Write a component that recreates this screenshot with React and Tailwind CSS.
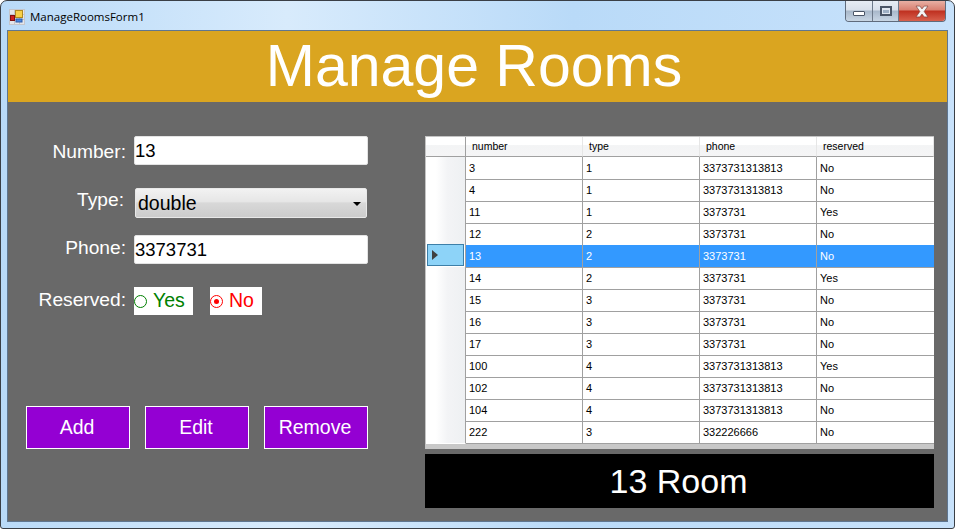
import React from 'react';

const rooms = [
    { number: '3', type: '1', phone: '3373731313813', reserved: 'No' },
    { number: '4', type: '1', phone: '3373731313813', reserved: 'No' },
    { number: '11', type: '1', phone: '3373731', reserved: 'Yes' },
    { number: '12', type: '2', phone: '3373731', reserved: 'No' },
    { number: '13', type: '2', phone: '3373731', reserved: 'No', selected: true },
    { number: '14', type: '2', phone: '3373731', reserved: 'Yes' },
    { number: '15', type: '3', phone: '3373731', reserved: 'No' },
    { number: '16', type: '3', phone: '3373731', reserved: 'No' },
    { number: '17', type: '3', phone: '3373731', reserved: 'No' },
    { number: '100', type: '4', phone: '3373731313813', reserved: 'Yes' },
    { number: '102', type: '4', phone: '3373731313813', reserved: 'No' },
    { number: '104', type: '4', phone: '3373731313813', reserved: 'No' },
    { number: '222', type: '3', phone: '332226666', reserved: 'No' },
];

const gridCols = 'grid grid-cols-[40px_117px_117px_117px_117px]';

const FormIcon = () => (
    <svg width="16" height="16" viewBox="0 0 16 16" className="shrink-0">
        <rect x="0.5" y="0.5" width="15" height="15" fill="#e4e6ea" stroke="#c4c6cc" />
        <path d="M0 5.5H16M0 10.5H16M5.5 0V16M10.5 0V16" stroke="#c4c6cc" />
        <rect x="6.5" y="1.5" width="7" height="7" fill="#f8d048" stroke="#b08a20" />
        <rect x="1.5" y="6.5" width="4" height="5" fill="#d02020" stroke="#801010" />
        <rect x="7" y="10" width="6" height="3" fill="#4a88e0" stroke="#2a5aa8" />
    </svg>
);

const WindowButtons = () => (
    <div className="flex h-[21px] self-start rounded-b-[4px] border border-t-0 border-[#5f6b7c] overflow-hidden">
        <div className="w-[27px] flex items-center justify-center pt-[4px] bg-[linear-gradient(#e6ecf4_0%,#d8e0ea_45%,#a8b8ca_50%,#c8d6e4_100%)] border-r border-[#6d7a8a]">
            <div className="w-[12px] h-[5px] bg-white border border-[#4a5566] rounded-[1px]"></div>
        </div>
        <div className="w-[26px] flex items-center justify-center bg-[linear-gradient(#e6ecf4_0%,#d8e0ea_45%,#a8b8ca_50%,#c8d6e4_100%)] border-r border-[#6d7a8a]">
            <div className="w-[12px] h-[10px] border-[2px] border-[#4a5566] bg-[#dfe6ef] flex items-center justify-center">
                <div className="w-[6px] h-[3px] bg-[#9fb0c4]"></div>
            </div>
        </div>
        <div className="w-[46px] flex items-center justify-center bg-[linear-gradient(#e8b0a4_0%,#d97f70_45%,#bf3020_50%,#d8604c_100%)]">
            <svg width="16" height="13" viewBox="0 0 14 12">
                <path d="M1.5 1H5L7 3.6L9 1H12.5L9 6L12.5 11H9L7 8.4L5 11H1.5L5 6Z" fill="#f4f4f4" stroke="#7a3a34" strokeWidth="0.6" />
            </svg>
        </div>
    </div>
);

const Radio = ({ color, checked, label, className }) => (
    <div className={`h-[28px] bg-white flex items-center text-[19.5px] ${className}`} style={{ color }}>
        <span className="w-[13px] h-[13px] rounded-full border flex items-center justify-center bg-white mr-[6px]" style={{ borderColor: color }}>
            {checked && <span className="w-[5px] h-[5px] rounded-full" style={{ backgroundColor: color }}></span>}
        </span>
        {label}
    </div>
);

const ActionButton = ({ children }) => (
    <button className="w-[104px] h-[43px] bg-[#9400d3] border border-white text-white text-[19.5px] pr-[2px]">{children}</button>
);

const FormRow = ({ label, className, labelClass, children }) => (
    <div className={`flex items-center ${className}`}>
        <label className={`w-[118px] text-right text-white text-[19.2px] leading-none ${labelClass}`}>{label}</label>
        {children}
    </div>
);

const TextBox = ({ value }) => (
    <input readOnly value={value} className="ml-[8px] w-[234px] h-[29px] bg-white border border-[#e3e3e3] rounded-[2px] text-[18.5px] text-black outline-none" />
);

const headerCell = 'bg-[linear-gradient(#ffffff_0%,#ffffff_40%,#f3f4f5_45%,#f5f5f6_100%)]';

const RoomsGrid = () => (
    <div className="border-t border-l border-[#c4c4c4] bg-white text-[11px] text-black">
        <div className={`${gridCols} h-[20px]`}>
            <div className={`border-r border-b border-[#a0a0a0] ${headerCell}`}></div>
            {['number', 'type', 'phone', 'reserved'].map((h) => (
                <div key={h} className={`border-r border-r-[#e6e6e6] border-b border-b-[#a0a0a0] pl-[6px] leading-[19px] text-[10.5px] ${headerCell}`}>{h}</div>
            ))}
        </div>
        {rooms.map((r) => (
            <div key={r.number} className={`${gridCols} h-[22px] ${r.selected ? 'text-white' : ''}`}>
                {r.selected ? (
                    <div className="border-r border-[#a0a0a0] bg-white">
                        <div className="h-[22px] -mt-px mr-px ml-px bg-[#8dd3f8] border border-[#3d7fa8] flex items-center pl-[4px]">
                            <span className="w-0 h-0 border-y-[5px] border-y-transparent border-l-[6px] border-l-[#404040]"></span>
                        </div>
                    </div>
                ) : (
                    <div className="border-r border-r-[#a0a0a0] border-b border-b-white bg-[linear-gradient(90deg,#ffffff_0%,#ffffff_25%,#f3f4f6_55%,#eef0f2_100%)]"></div>
                )}
                {[r.number, r.type, r.phone, r.reserved].map((v, i) => (
                    <div key={i} className={`pl-[3px] leading-[22px] border-b border-b-[#a0a0a0] ${i < 3 ? 'border-r border-r-[#a0a0a0]' : ''} ${r.selected ? 'bg-[#3399ff]' : ''}`}>{v}</div>
                ))}
            </div>
        ))}
        <div className="h-[6px] bg-[#c8c8c8]"></div>
    </div>
);

const App = () => {
    return (
        <div className="w-[955px] h-[529px] flex flex-col bg-white font-['Liberation_Sans',sans-serif]">
            <div className="flex-1 flex flex-col rounded-t-[7px] rounded-b-[3px] border border-[#3a3f46] bg-[linear-gradient(90deg,#b9daf8_0%,#d8ebfc_30%,#b9daf8_60%,#c8e2fb_100%)]">
                <div className="h-[29px] flex items-start justify-between pl-[8px] pr-[8px]">
                    <div className="flex items-center gap-[5px] pt-[7px]">
                        <FormIcon />
                        <span className="text-[11.5px] text-black font-['Open_Sans',sans-serif]">ManageRoomsForm1</span>
                    </div>
                    <WindowButtons />
                </div>
                <div className="mx-[6px] mb-[6px] flex-1 flex flex-col bg-[#696969] border border-[#5f7690]">
                    <div className="h-[71px] bg-[#daa520] flex items-center justify-center text-white text-[59px] leading-none pr-[7px]">Manage Rooms</div>
                    <div className="flex-1 flex pt-[34px]">
                        <div className="w-[417px] flex flex-col">
                            <FormRow label="Number:" labelClass="pt-[3px]"><TextBox value="13" /></FormRow>
                            <FormRow label="Type:" className="mt-[23px]" labelClass="pb-[7px] pr-[2px]">
                                <div className="ml-[9px] w-[232px] h-[30px] rounded-[2px] border border-[#e8e8e8] flex items-center justify-between pl-[2px] pr-[5px] pt-[1px] text-[19.5px] text-black bg-[linear-gradient(#f2f2f2_0%,#e6e6e6_45%,#d8d8d8_50%,#cccccc_100%)]">
                                    double
                                    <span className="w-0 h-0 border-x-[4px] border-x-transparent border-t-[4px] border-t-black"></span>
                                </div>
                            </FormRow>
                            <FormRow label="Phone:" className="mt-[17px]" labelClass="pb-[3px]"><TextBox value="3373731" /></FormRow>
                            <FormRow label="Reserved:" className="mt-[23px]" labelClass="pb-[3px]">
                                <Radio color="#008000" label="Yes" className="ml-[8px] w-[59px]" />
                                <Radio color="#ff0000" checked label="No" className="ml-[17px] w-[52px]" />
                            </FormRow>
                            <div className="flex gap-[15px] pl-[18px] mt-[91px]">
                                <ActionButton>Add</ActionButton>
                                <ActionButton>Edit</ActionButton>
                                <ActionButton>Remove</ActionButton>
                            </div>
                        </div>
                        <div className="w-[509px] flex flex-col">
                            <RoomsGrid />
                            <div className="mt-[5px] h-[54px] bg-black text-white text-[34px] flex items-center justify-center pr-[2px]">13 Room</div>
                        </div>
                    </div>
                </div>
            </div>
        </div>
    );
};

export default App;
